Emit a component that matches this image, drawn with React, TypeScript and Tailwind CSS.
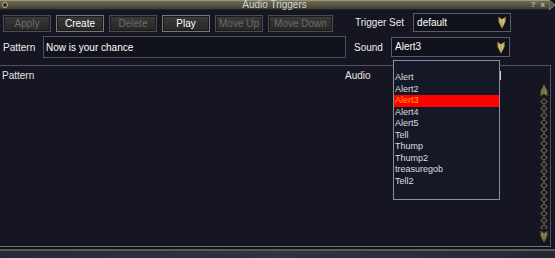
import React from 'react';
import clsx from 'clsx';

// --- small drawings ---
function GoldSpear({ dim = false, up = false }: { dim?: boolean; up?: boolean }) {
  const id = dim ? (up ? 'spU' : 'spD') : 'spG';
  return (
    <svg width="10" height="15" viewBox="0 0 10 15" className={clsx('block', up && 'rotate-180')}>
      <defs>
        <linearGradient id={id} x1="0" y1="0" x2="1" y2="0">
          <stop offset="0" stopColor={dim ? '#5c5638' : '#8a7a30'} />
          <stop offset="0.5" stopColor={dim ? '#a89c6a' : '#f4e69a'} />
          <stop offset="1" stopColor={dim ? '#4e4930' : '#9a8838'} />
        </linearGradient>
      </defs>
      <path d="M1 1 L5 4 L9 1 L9 6.5 L5 14 L1 6.5 Z" fill={`url(#${id})`} stroke="#1d1a10" strokeWidth="0.8" />
      <path d="M5 4.5 L5 12.5" stroke={dim ? '#3e3a26' : '#7a6a28'} strokeWidth="0.8" />
    </svg>
  );
}

function Chain() {
  return (
    <svg width="8" height="100%" className="block">
      <defs>
        <pattern id="chain" width="8" height="7" patternUnits="userSpaceOnUse">
          <path d="M4 0.5 L7 3.5 L4 6.5 L1 3.5 Z" fill="none" stroke="#5f5a3e" strokeWidth="1.2" />
        </pattern>
      </defs>
      <rect width="8" height="100%" fill="url(#chain)" />
    </svg>
  );
}

// --- controls ---
function Btn({ label, wide, disabled }: { label: string; wide?: boolean; disabled?: boolean }) {
  return (
    <div
      className={clsx(
        'h-[17px] flex items-center justify-center text-[10px] leading-none border bg-gradient-to-b from-[#3b3b3b] to-[#262626] shadow-[inset_0_0_0_1px_#1a1a1a]',
        wide ? 'w-[65px]' : 'w-[48px]',
        disabled ? 'text-[#6c6c6c] border-[#4e4e4e]' : 'text-white border-[#777777]'
      )}
    >
      {label}
    </div>
  );
}

function Select({ value, wide }: { value: string; wide?: boolean }) {
  return (
    <div
      className={clsx(
        'flex items-center justify-between border border-[#575c6c] bg-[#10111a] pl-[3px] pr-[3px] text-[10px] text-white',
        wide ? 'w-[119px] h-[20px]' : 'w-[98px] h-[19px]'
      )}
    >
      <span className="leading-none">{value}</span>
      <GoldSpear />
    </div>
  );
}

const SOUNDS = ['Alert', 'Alert2', 'Alert3', 'Alert4', 'Alert5', 'Tell', 'Thump', 'Thump2', 'treasuregob', 'Tell2'];

export default function App() {
  return (
    <div className="relative w-[555px] h-[258px] overflow-hidden bg-[#161622] font-['Liberation_Sans',Arial,sans-serif] flex flex-col">
      {/* title bar */}
      <div className="flex h-[10px] shrink-0">
        <div className="relative flex-1 flex items-center justify-center border-t border-[#9c9878] border-b border-b-[#24231c] bg-gradient-to-b from-[#6e6c58] to-[#403f34]">
          <div className="absolute left-[2px] top-[1px] w-[6px] h-[6px] rounded-full border border-[#c8b870] bg-[#2a2820]" />
          <span className="text-[10px] leading-none text-[#d2d2d2]">Audio Triggers</span>
          <div className="absolute right-[4px] top-0 flex gap-[5px] text-[8px] leading-[8px] font-bold text-[#bdbdb0]">
            <span>?</span>
            <span>x</span>
          </div>
        </div>
        <svg width="6" height="10" className="block">
          <path d="M0 0 L6 5 L0 10 Z" fill="#5a5848" stroke="#9c9878" strokeWidth="0.8" />
        </svg>
      </div>

      {/* row 1 */}
      <div className="flex items-start mt-[3px] pl-[3px] h-[19px]">
        <div className="flex gap-[5px] mt-[2px]">
          <Btn label="Apply" disabled />
          <Btn label="Create" />
          <Btn label="Delete" disabled />
          <Btn label="Play" />
          <Btn label="Move Up" disabled />
          <Btn label="Move Down" wide disabled />
        </div>
        <span className="ml-[22px] mr-[9px] self-center text-[10px] text-[#ececec]">Trigger Set</span>
        <Select value="default" />
      </div>

      {/* row 2 */}
      <div className="flex items-center mt-[4px] pl-[3px] h-[22px]">
        <span className="w-[40px] text-[10px] text-[#ececec]">Pattern</span>
        <div className="w-[303px] h-[22px] flex items-center border border-[#4b5062] bg-[#11121b] pl-[2px] text-[10px] text-white">
          Now is your chance
        </div>
        <span className="ml-[8px] w-[37px] text-[10px] text-[#ececec]">Sound</span>
        <Select value="Alert3" wide />
      </div>

      {/* list */}
      <div className="mt-[7px] w-[551px] h-[182px] shrink-0 border-t border-r border-b border-[#4e5466] border-b-[#6d7488] flex">
        <div className="flex-1 relative">
          <div className="flex items-center h-[12px] mt-[3px] text-[10px] text-[#e4e4e4]">
            <span className="ml-[2px] w-[343px]">Pattern</span>
            <span className="w-[155px]">Audio</span>
            <span className="w-[1px] h-[9px] bg-[#cfcfcf]" />
          </div>
        </div>
        <div className="w-[10px] mr-[1px] flex flex-col items-center pt-[17px] pb-[2px]">
          <GoldSpear dim up />
          <div className="flex-1 overflow-hidden">
            <Chain />
          </div>
          <GoldSpear dim />
        </div>
      </div>

      {/* bottom edge */}
      <div className="h-[2px] bg-[#12121a]" />
      <div className="h-[2px] bg-[#5c5c4e]" />
      <div className="flex-1 bg-gradient-to-r from-[#242a38] via-[#2e3444] to-[#222836]" />

      {/* open dropdown */}
      <div className="absolute left-[393px] top-[60px] w-[107px] h-[140px] border border-[#8a8fa0] bg-[#151827] pt-[11px] text-[9px] text-[#dedede]">
        {SOUNDS.map((s) => (
          <div
            key={s}
            className={clsx(
              'h-[11.5px] leading-[11.5px] pl-[1px]',
              s === 'Alert3' && 'bg-[#ff0000] text-[#ffb000]'
            )}
          >
            {s}
          </div>
        ))}
      </div>
    </div>
  );
}
